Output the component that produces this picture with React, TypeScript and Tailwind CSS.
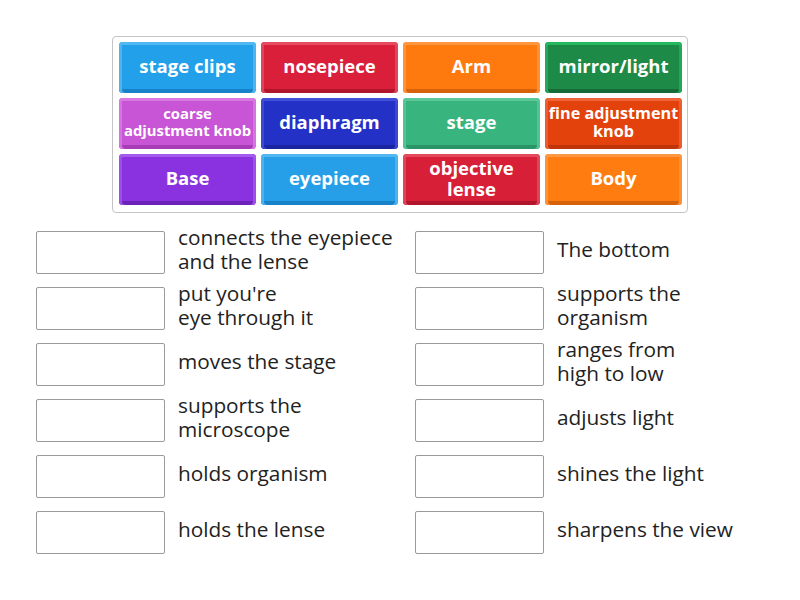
import React from "react";

type Tile = { label: React.ReactNode; bg: string; size: string };

const tiles: Tile[] = [
  { label: "stage clips", bg: "bg-[#22a0ea] shadow-[inset_0_3px_0_#4fb8f2,inset_3px_0_0_#4fb4ee,inset_-3px_0_0_#4fb4ee,inset_0_-4px_0_#1680c8]", size: "text-[18.5px]" },
  { label: "nosepiece", bg: "bg-[#d91f3a] shadow-[inset_0_3px_0_#e54a5e,inset_3px_0_0_#e04458,inset_-3px_0_0_#e04458,inset_0_-4px_0_#b0152c]", size: "text-[18.5px]" },
  { label: "Arm", bg: "bg-[#ff7a0e] shadow-[inset_0_3px_0_#ff9640,inset_3px_0_0_#ff9238,inset_-3px_0_0_#ff9238,inset_0_-4px_0_#d8620a]", size: "text-[18.5px]" },
  { label: "mirror/light", bg: "bg-[#1d8a48] shadow-[inset_0_3px_0_#26b85c,inset_3px_0_0_#24a858,inset_-3px_0_0_#24a858,inset_0_-4px_0_#156c38]", size: "text-[18.5px]" },
  { label: <>coarse<br />adjustment knob</>, bg: "bg-[#c855d6] shadow-[inset_0_3px_0_#d878e2,inset_3px_0_0_#d474de,inset_-3px_0_0_#d474de,inset_0_-4px_0_#a83cb6]", size: "text-[14.8px] leading-[17px]" },
  { label: "diaphragm", bg: "bg-[#2331c6] shadow-[inset_0_3px_0_#4250d8,inset_3px_0_0_#3a48d2,inset_-3px_0_0_#3a48d2,inset_0_-4px_0_#1a25a0]", size: "text-[18.5px]" },
  { label: "stage", bg: "bg-[#38b47e] shadow-[inset_0_3px_0_#5cc898,inset_3px_0_0_#54c292,inset_-3px_0_0_#54c292,inset_0_-4px_0_#2a9466]", size: "text-[18.5px]" },
  { label: <>fine adjustment<br />knob</>, bg: "bg-[#e4420c] shadow-[inset_0_3px_0_#f0643a,inset_3px_0_0_#ec5c30,inset_-3px_0_0_#ec5c30,inset_0_-4px_0_#c0340a]", size: "text-[16.2px] leading-[18px]" },
  { label: "Base", bg: "bg-[#8a32e0] shadow-[inset_0_3px_0_#a45aec,inset_3px_0_0_#9c50e8,inset_-3px_0_0_#9c50e8,inset_0_-4px_0_#6c22b8]", size: "text-[18.5px]" },
  { label: "eyepiece", bg: "bg-[#279ee8] shadow-[inset_0_3px_0_#52b6f0,inset_3px_0_0_#4cb2ee,inset_-3px_0_0_#4cb2ee,inset_0_-4px_0_#1882c8]", size: "text-[18.5px]" },
  { label: <>objective<br />lense</>, bg: "bg-[#d81f38] shadow-[inset_0_3px_0_#e44a5e,inset_3px_0_0_#e04458,inset_-3px_0_0_#e04458,inset_0_-4px_0_#b0152c]", size: "text-[18.5px] leading-[21px]" },
  { label: "Body", bg: "bg-[#ff7c10] shadow-[inset_0_3px_0_#ff9842,inset_3px_0_0_#ff9238,inset_-3px_0_0_#ff9238,inset_0_-4px_0_#d8620a]", size: "text-[18.5px]" },
];

const left: React.ReactNode[] = [
  <>connects the eyepiece<br />and the lense</>,
  <>put you're<br />eye through it</>,
  "moves the stage",
  <>supports the<br />microscope</>,
  "holds organism",
  "holds the lense",
];
const right: React.ReactNode[] = [
  "The bottom",
  <>supports the<br />organism</>,
  <>ranges from<br />high to low</>,
  "adjusts light",
  "shines the light",
  "sharpens the view",
];

function Row({ text }: { text: React.ReactNode }) {
  return (
    <div className="flex items-center h-[43px]">
      <div className="w-[129px] h-[43px] shrink-0 border border-[#9a9a9a] rounded-[2px] bg-white" />
      <div className="ml-[13px] -mt-[7px] text-[20.8px] leading-[24px] text-[#222222] whitespace-nowrap">{text}</div>
    </div>
  );
}

export default function App() {
  return (
    <div className="w-[800px] h-[600px] bg-white relative" style={{ fontFamily: '"Open Sans", "Noto Sans", sans-serif' }}>
      <div className="pt-[36px] pl-[112px]">
        <div className="w-[576px] h-[177px] border border-[#c4c4c4] rounded-[4px] pt-[5px] pl-[6px]">
          <div className="grid grid-cols-[137px_137px_137px_137px] grid-rows-[51px_51px_51px] gap-x-[5px] gap-y-[5px]">
            {tiles.map((t, i) => (
              <div
                key={i}
                className={`${t.bg} rounded-[4px] flex items-center justify-center text-center text-white font-bold ${t.size}`}
              >
                <span className="-mt-[4px]">{t.label}</span>
              </div>
            ))}
          </div>
        </div>
      </div>
      <div className="flex pl-[36px] pt-[18px]">
        <div className="w-[379px] flex flex-col gap-y-[13px]">
          {left.map((t, i) => (
            <Row key={i} text={t} />
          ))}
        </div>
        <div className="flex flex-col gap-y-[13px]">
          {right.map((t, i) => (
            <Row key={i} text={t} />
          ))}
        </div>
      </div>
    </div>
  );
}
